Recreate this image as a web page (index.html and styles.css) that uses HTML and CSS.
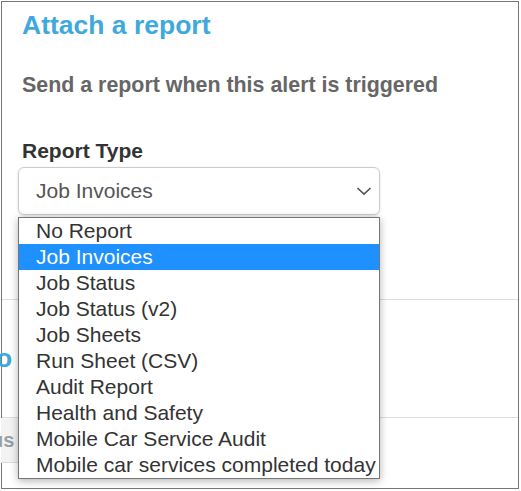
FILE: index.html
```html
<!DOCTYPE html>
<html lang="en">
<head>
    <meta charset="UTF-8">
    <meta name="viewport" content="width=device-width, initial-scale=1.0">
    <title>Attach a report</title>
    <link rel="stylesheet" href="styles.css">
</head>
<body>
    <div class="panel">
        <section class="attach">
            <h2 class="attach-title">Attach a report</h2>
            <p class="attach-hint">Send a report when this alert is triggered</p>
            <div class="field">
                <label class="field-label">Report Type</label>
                <div class="select">
                    <span class="select-value">Job Invoices</span>
                    <svg class="select-arrow" width="16" height="10" viewBox="0 0 16 10">
                        <polyline points="1.5,2 8,8 14.5,2" fill="none" stroke="#555" stroke-width="1.7"/>
                    </svg>
                    <ul class="select-menu">
                        <li>No Report</li>
                        <li class="selected">Job Invoices</li>
                        <li>Job Status</li>
                        <li>Job Status (v2)</li>
                        <li>Job Sheets</li>
                        <li>Run Sheet (CSV)</li>
                        <li>Audit Report</li>
                        <li>Health and Safety</li>
                        <li>Mobile Car Service Audit</li>
                        <li>Mobile car services completed today</li>
                    </ul>
                </div>
            </div>
        </section>
        <section class="recipients">
            <h2 class="recipients-title">o</h2>
            <div class="table-row">
                <div class="table-head">us</div>
            </div>
        </section>
    </div>
</body>
</html>
```

FILE: styles.css
```css
body {
    margin: 0;
    font-family: "Liberation Sans", Arial, sans-serif;
    background-color: white;
}
.panel {
    margin: 1px;
    width: 518px;
    height: 488px;
    box-sizing: border-box;
    border: 1px solid #777;
}
.attach {
    padding: 8px 16px 84px 16px;
    border-bottom: 1px solid #ddd;
}
.attach-title {
    margin: 0;
    padding-left: 4px;
    font-size: 26.5px;
    line-height: 30px;
    font-weight: bold;
    color: #3fa9dd;
}
.attach-hint {
    margin: 33px 0 0 0;
    padding-left: 4px;
    font-size: 21.4px;
    line-height: 24px;
    font-weight: bold;
    color: #666;
}
.field {
    margin-top: 42px;
}
.field-label {
    display: block;
    padding-left: 4px;
    font-size: 21px;
    line-height: 24px;
    font-weight: bold;
    color: #333;
}
.select {
    position: relative;
    margin-top: 4px;
    width: 362px;
    height: 48px;
    box-sizing: border-box;
    padding: 0 7px 0 17px;
    display: flex;
    align-items: center;
    justify-content: space-between;
    border: 1px solid #ccc;
    border-radius: 6px;
    box-shadow: 0 1px 3px rgba(0, 0, 0, 0.12);
    font-size: 21px;
    color: #555;
}
.select-menu {
    position: absolute;
    top: 49px;
    left: -1px;
    z-index: 1;
    width: 362px;
    box-sizing: border-box;
    margin: 0;
    padding: 0;
    list-style: none;
    background-color: white;
    border: 1px solid #767676;
    box-shadow: 0 2px 8px rgba(0, 0, 0, 0.3);
}
.select-menu li {
    height: 26px;
    line-height: 26px;
    padding-left: 17px;
    font-size: 21px;
    color: #333;
    white-space: nowrap;
}
.select-menu li.selected {
    background-color: #1e90ff;
    color: white;
}
.recipients {
    padding-top: 43px;
}
.recipients-title {
    margin: 0 0 44px -6px;
    font-size: 26.5px;
    line-height: 30px;
    font-weight: bold;
    color: #3fa9dd;
}
.table-row {
    border-top: 1px solid #ddd;
}
.table-head {
    width: 200px;
    height: 44px;
    margin-left: -1px;
    text-indent: -10px;
    line-height: 44px;
    font-size: 20px;
    font-weight: bold;
    color: #9a9fa6;
    background-color: #f3f3f3;
    border-bottom: 1px solid #ddd;
}
```
